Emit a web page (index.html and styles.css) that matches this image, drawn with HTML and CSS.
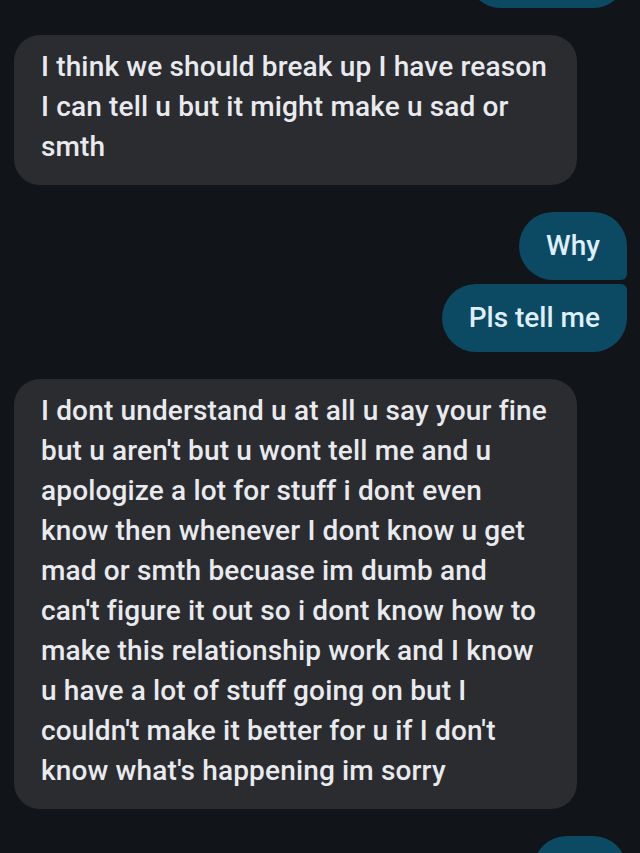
FILE: index.html
```html
<!DOCTYPE html>
<html lang="en">

<head>
    <meta charset="UTF-8">
    <meta name="viewport" content="width=device-width, initial-scale=1.0">
    <link rel="stylesheet" href="styles.css">
    <title>Messages</title>
</head>

<body>
    <div class="thread">
        <div class="bubble sent stub top-stub"></div>

        <div class="bubble received">
            I think we should break up I have reason<br>
            I can tell u but it might make u sad or<br>
            smth
        </div>

        <div class="group">
            <div class="bubble sent first">Why</div>
            <div class="bubble sent last">Pls tell me</div>
        </div>

        <div class="bubble received">
            I dont understand u at all u say your fine<br>
            but u aren't but u wont tell me and u<br>
            apologize a lot for stuff i dont even<br>
            know then whenever I dont know u get<br>
            mad or smth becuase im dumb and<br>
            can't figure it out so i dont know how to<br>
            make this relationship work and I know<br>
            u have a lot of stuff going on but I<br>
            couldn't make it better for u if I don't<br>
            know what's happening im sorry
        </div>

        <div class="bubble sent stub bottom-stub"></div>
    </div>
</body>

</html>
```

FILE: styles.css
```css
html, body {
    height: 100%;
}

body {
    background-color: #111418;
    color: #e9eaee;
    font-family: Roboto, "Noto Sans", sans-serif;
    margin: 0;
    padding: 0;
    overflow: hidden;
}

.thread {
    display: flex;
    flex-direction: column;
    gap: 27px;
    padding: 0 13px 0 14px;
    margin-top: -60px;
}

.group {
    display: flex;
    flex-direction: column;
    align-items: flex-end;
    gap: 4px;
}

.bubble {
    font-size: 28px;
    line-height: 40px;
    font-weight: 500;
    white-space: nowrap;
}

.received {
    align-self: flex-start;
    width: 563px;
    box-sizing: border-box;
    padding: 12px 27px 18px;
    background-color: #2a2c30;
    border-radius: 26px;
    letter-spacing: 0.15px;
}

.sent {
    align-self: flex-end;
    background-color: #0b4a62;
    color: #dfeefa;
    padding: 14px 27px;
    border-radius: 34px;
}

.sent.first {
    border-bottom-right-radius: 6px;
}

.sent.last {
    border-top-right-radius: 6px;
}

.stub {
    padding: 0;
    height: 68px;
}

.top-stub {
    width: 160px;
}

.bottom-stub {
    width: 94px;
}
```
